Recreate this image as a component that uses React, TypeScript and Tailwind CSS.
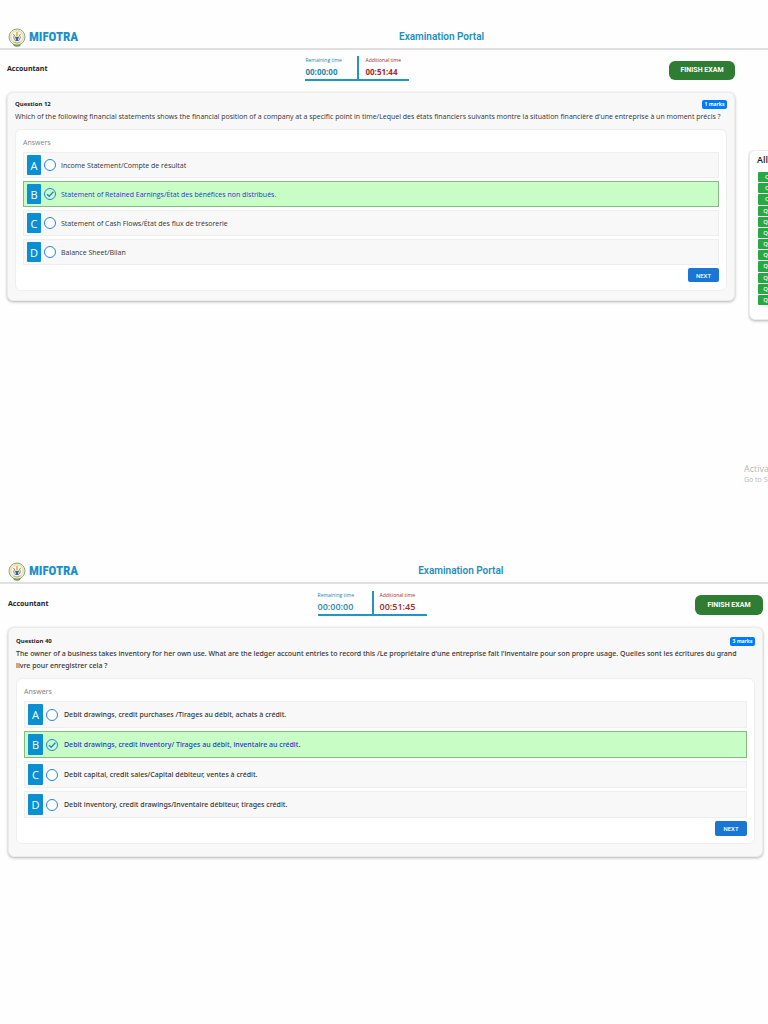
import clsx from "clsx";

type Exam = {
  id: string;
  number: number;
  marks: number;
  question: string;
  answers: string[];
  selected: number;
  remaining: string;
  additional: string;
  large?: boolean;
};

const exams: Exam[] = [
  {
    id: "q12",
    number: 12,
    marks: 1,
    question:
      "Which of the following financial statements shows the financial position of a company at a specific point in time/Lequel des états financiers suivants montre la situation financière d'une entreprise à un moment précis ?",
    answers: [
      "Income Statement/Compte de résultat",
      "Statement of Retained Earnings/État des bénéfices non distribués.",
      "Statement of Cash Flows/État des flux de trésorerie",
      "Balance Sheet/Bilan",
    ],
    selected: 1,
    remaining: "00:00:00",
    additional: "00:51:44",
  },
  {
    id: "q40",
    number: 40,
    marks: 3,
    question:
      "The owner of a business takes inventory for her own use. What are the ledger account entries to record this /Le propriétaire d'une entreprise fait l'inventaire pour son propre usage. Quelles sont les écritures du grand livre pour enregistrer cela ?",
    answers: [
      "Debit drawings, credit purchases /Tirages au débit, achats à crédit.",
      "Debit drawings, credit inventory/ Tirages au débit, inventaire au crédit.",
      "Debit capital, credit sales/Capital débiteur, ventes à crédit.",
      "Debit inventory, credit drawings/Inventaire débiteur, tirages crédit.",
    ],
    selected: 1,
    remaining: "00:00:00",
    additional: "00:51:45",
    large: true,
  },
];

const questionNumbers = ["Q1", "Q2", "Q3", "Q10", "Q11", "Q12", "Q13", "Q14", "Q15", "Q16", "Q17", "Q18"];

function Emblem() {
  return (
    <svg viewBox="0 0 36 38" className="h-[19px] w-[18px] shrink-0" aria-hidden="true">
      <circle cx="18" cy="18" r="16" fill="#f7f5e6" stroke="#8fa676" strokeWidth="2" />
      <circle cx="18" cy="18" r="12.5" fill="none" stroke="#ddd5a4" strokeWidth="2" />
      <path d="M11 12 L17 22 M25 12 L19 22" stroke="#a58f70" strokeWidth="2" />
      <path d="M18 8v9" stroke="#e2c35b" strokeWidth="4" />
      <path d="M11 17q1 8 5 9M25 17q-1 8-5 9" fill="none" stroke="#6c8fb8" strokeWidth="2" />
      <path d="M15 18h6l-1 8h-4z" fill="#3f5da0" />
      <path d="M11 28q7 4 14 0" fill="none" stroke="#d2ad62" strokeWidth="2" />
      <path d="M10 32q8 5 16 0l-2 4q-6 3-12 0z" fill="#5a9a52" />
    </svg>
  );
}

function Header({ large }: { large?: boolean }) {
  return (
    <header className="relative flex h-[26px] items-center border-b-2 border-[#e0e0e0] pt-0.5 pl-2">
      <a href="#" className="flex items-center gap-[3px]">
        <Emblem />
        <span className="font-['Roboto_Condensed','DejaVu_Sans_Condensed',sans-serif] text-[13px] leading-[14px] font-extrabold text-[#1a8fcb]">
          MIFOTRA
        </span>
      </a>
      <div
        className={clsx(
          "absolute inset-y-0 left-0 flex items-center justify-center pt-0.5",
          large ? "w-[120%]" : "w-[115%]",
        )}
      >
        <h1 className="font-[Roboto,sans-serif] text-[10px] leading-3 font-semibold text-[#1f8fc0]">
          Examination Portal
        </h1>
      </div>
    </header>
  );
}

function Timer({
  label,
  value,
  large,
  className,
}: {
  label: string;
  value: string;
  large?: boolean;
  className?: string;
}) {
  return (
    <div className={clsx("flex flex-col", className)}>
      <span className="text-[5px] leading-[8px]">{label}</span>
      <span className={clsx("leading-[15px]", large ? "text-[9px] font-semibold" : "text-[8px] font-bold")}>
        {value}
      </span>
    </div>
  );
}

function StatusBar({ exam }: { exam: Exam }) {
  return (
    <div className={clsx("flex items-start", exam.large ? "pt-[7px]" : "pt-[6px]")}>
      <h2 className="w-[41%] pt-[7px] text-[7px] leading-[12px] font-bold text-[#222]">Accountant</h2>
      <div className="flex border-b-2 border-[#2196c0]">
        <Timer
          label="Remaining time"
          value={exam.remaining}
          large={exam.large}
          className={clsx("border-r-2 border-[#2196c0] text-[#2b87a8]", exam.large ? "w-14" : "w-[54px]")}
        />
        <Timer
          label="Additional time"
          value={exam.additional}
          large={exam.large}
          className={clsx("pl-1.5 text-[#a12a2a]", exam.large ? "w-[53px]" : "w-[50px]")}
        />
      </div>
      <button
        className={clsx(
          "ml-auto rounded-md bg-[#2e7d32] font-[Roboto,sans-serif] text-[7px] font-bold text-white",
          exam.large ? "mt-1 h-5 w-[68px]" : "mt-[5px] h-[19px] w-[66px]",
        )}
      >
        FINISH EXAM
      </button>
    </div>
  );
}

function Answer({ exam, index }: { exam: Exam; index: number }) {
  const checked = index === exam.selected;

  return (
    <label
      className={clsx(
        "flex items-center border pl-[3px]",
        exam.large ? "h-[27px]" : "h-[26px]",
        checked ? "border-[#86b986] bg-[#c8fdc6] text-[#2a35cc]" : "border-[#eeeeee] bg-[#f8f8f8] text-[#333]",
      )}
    >
      <span
        className={clsx(
          "flex items-center justify-center rounded-[1px] bg-[#0a8fd2] font-['Open_Sans',sans-serif] text-[11px] leading-none font-normal text-white",
          exam.large ? "h-[21px] w-[15px]" : "h-5 w-[14px]",
        )}
      >
        {"ABCD"[index]}
      </span>
      <span className="relative ml-[3px] size-3">
        <input
          type="radio"
          name={exam.id}
          defaultChecked={checked}
          className="peer block size-3 appearance-none rounded-full border border-[#2583e0] bg-white checked:bg-transparent"
        />
        <svg
          viewBox="0 0 12 12"
          className="pointer-events-none absolute inset-0 hidden size-3 peer-checked:block"
          aria-hidden="true"
        >
          <path d="M3 6.2 L5.2 8.2 L9.4 3.8" fill="none" stroke="#2a86c8" strokeWidth="1.4" />
        </svg>
      </span>
      <span className={clsx("text-[7px] leading-[11px]", exam.large ? "ml-1.5" : "ml-[5px]")}>
        {exam.answers[index]}
      </span>
    </label>
  );
}

function QuestionCard({ exam }: { exam: Exam }) {
  return (
    <article
      className={clsx(
        "rounded-md border border-[#ececec] bg-[#f8f8f8] px-[7px] shadow-[0_1px_3px_rgba(0,0,0,0.3)]",
        exam.large ? "pt-2 pb-3 font-['Noto_Sans',sans-serif] font-medium" : "pt-[6px] pb-[9px]",
      )}
    >
      <div className="flex h-[10px] items-center justify-between font-['Open_Sans',sans-serif]">
        <h3 className="text-[6px] leading-[10px] font-bold text-[#222]">Question {exam.number}</h3>
        <span className="flex h-[9px] w-[25px] items-center justify-center rounded-[2px] bg-[#007bff] text-[5px] leading-none font-bold whitespace-nowrap text-white">
          {exam.marks} marks
        </span>
      </div>
      <p className={clsx("mt-0.5 text-[7px] text-[#333]", exam.large ? "pr-3 leading-3" : "leading-[11px]")}>
        {exam.question}
      </p>

      <form
        className={clsx(
          "rounded-md border border-[#eeeeee] bg-white px-[7px] pt-[7px]",
          exam.large ? "mt-[6px] pb-[7px]" : "mt-[7px] pb-2",
        )}
      >
        <fieldset className="flex flex-col gap-[3px]">
          <legend className="mb-[3px] text-[7px] leading-3 font-normal text-[#858585]">Answers</legend>
          {exam.answers.map((answer, index) => (
            <Answer key={answer} exam={exam} index={index} />
          ))}
        </fieldset>
        <button
          type="button"
          className={clsx(
            "mt-[3px] ml-auto block rounded-[2px] bg-[#1976d2] font-[Roboto,sans-serif] text-[6px] font-medium text-white",
            exam.large ? "h-[15px] w-8" : "h-[14px] w-[31px]",
          )}
        >
          NEXT
        </button>
      </form>
    </article>
  );
}

function QuestionList() {
  return (
    <aside className="w-5 shrink-0 overflow-hidden pb-1 pl-px">
      <div className="h-[170px] w-[130px] rounded-md border border-[#ececec] bg-white pt-[3px] pl-2 shadow-[0_1px_3px_rgba(0,0,0,0.3)]">
        <h3 className="-ml-px text-[9px] leading-3 font-semibold text-[#222]">All Questions</h3>
        <div className="mt-[6px] flex h-[133px] w-[22px] flex-col gap-px">
          {questionNumbers.map((label) => (
            <button
              key={label}
              className="flex flex-1 items-center justify-center rounded-[1px] bg-[#28a745] text-[6px] leading-none font-semibold text-white"
            >
              {label}
            </button>
          ))}
        </div>
      </div>
    </aside>
  );
}

export default function App() {
  const [first, second] = exams;

  return (
    <main className="min-h-screen overflow-hidden bg-[#fefefe] font-['Open_Sans',sans-serif]">
      <section className="pt-6">
        <Header />
        <div className="flex gap-[13px] pl-[7px]">
          <div className="min-w-0 flex-1">
            <StatusBar exam={first} />
            <div className="mt-[11px]">
              <QuestionCard exam={first} />
            </div>
          </div>
          <div className="flex pt-[100px]">
            <QuestionList />
          </div>
        </div>
        <div className="mt-[139px] ml-auto w-6 overflow-hidden pb-[49px] whitespace-nowrap text-[#b8b8b8]">
          <p className="text-[9px] leading-3">Activate Windows</p>
          <p className="text-[7px] leading-[10px]">Go to Settings</p>
        </div>
      </section>

      <section className="pt-6">
        <Header large />
        <div className="pr-[5px] pl-2">
          <StatusBar exam={second} />
          <div className="mt-[11px]">
            <QuestionCard exam={second} />
          </div>
        </div>
      </section>
    </main>
  );
}
